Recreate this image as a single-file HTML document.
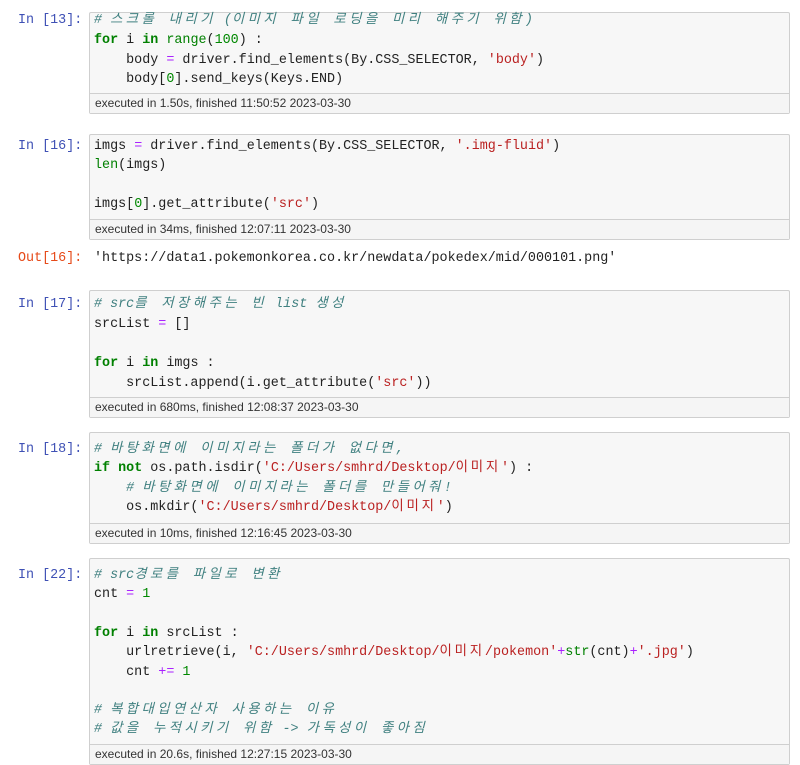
<!DOCTYPE html>
<html><head><meta charset="utf-8"><style>
body{margin:0;width:800px;height:752px;overflow:hidden;background:#fff;position:relative;font-family:"Liberation Mono","Noto Sans CJK KR",monospace;}
.box{position:absolute;left:89px;width:701px;background:#f7f7f7;border:1px solid #cfcfcf;border-radius:2px;box-sizing:border-box;}
.exec{position:absolute;left:0;right:0;bottom:0;height:19px;border-top:1px solid #cfcfcf;font:12px "Liberation Sans",sans-serif;color:#333;padding-left:5px;line-height:18px;background:#f5f5f5}
.l{position:absolute;left:94px;font-size:13.4px;white-space:pre;color:#222;line-height:19px;}
.p{position:absolute;left:18px;font-size:13.4px;color:#3f51b5;white-space:pre;line-height:19px;}
.o{color:#e64a19}
.c{color:#408080;font-style:italic}
.k{color:#008000;font-weight:bold}
.n{color:#080}
.op{color:#aa22ff}
.s{color:#ba2121}
.b{color:#008000}
.h{letter-spacing:3.4px}
.s .h{letter-spacing:2.8px}
</style></head><body>
<div class="box" style="top:12px;height:102px"><div class="exec">executed in 1.50s, finished 11:50:52 2023-03-30</div></div>
<div class="p" style="top:11px">In [13]:</div>
<div class="l" style="top:11px"><span class="c"># <span class="h">스크롤 내리기</span> (<span class="h">이미지 파일 로딩을 미리 해주기 위함</span>)</span></div>
<div class="l" style="top:31px"><span class="k">for</span> i <span class="k">in</span> <span class="b">range</span>(<span class="n">100</span>) :</div>
<div class="l" style="top:51px">    body <span class="op">=</span> driver.find_elements(By.CSS_SELECTOR, <span class="s">'body'</span>)</div>
<div class="l" style="top:70px">    body[<span class="n">0</span>].send_keys(Keys.END)</div>

<div class="box" style="top:134px;height:106px"><div class="exec">executed in 34ms, finished 12:07:11 2023-03-30</div></div>
<div class="p" style="top:137px">In [16]:</div>
<div class="l" style="top:137px">imgs <span class="op">=</span> driver.find_elements(By.CSS_SELECTOR, <span class="s">'.img-fluid'</span>)</div>
<div class="l" style="top:156px"><span class="b">len</span>(imgs)</div>
<div class="l" style="top:195px">imgs[<span class="n">0</span>].get_attribute(<span class="s">'src'</span>)</div>

<div class="p o" style="top:249px">Out[16]:</div>
<div class="l" style="top:249px">'https://data1.pokemonkorea.co.kr/newdata/pokedex/mid/000101.png'</div>

<div class="box" style="top:290px;height:128px"><div class="exec">executed in 680ms, finished 12:08:37 2023-03-30</div></div>
<div class="p" style="top:295px">In [17]:</div>
<div class="l" style="top:295px"><span class="c"># src<span class="h">를 저장해주는 빈</span> list <span class="h">생성</span></span></div>
<div class="l" style="top:315px">srcList <span class="op">=</span> []</div>
<div class="l" style="top:354px"><span class="k">for</span> i <span class="k">in</span> imgs :</div>
<div class="l" style="top:374px">    srcList.append(i.get_attribute(<span class="s">'src'</span>))</div>

<div class="box" style="top:432px;height:112px"><div class="exec">executed in 10ms, finished 12:16:45 2023-03-30</div></div>
<div class="p" style="top:440px">In [18]:</div>
<div class="l" style="top:440px"><span class="c"># <span class="h">바탕화면에 이미지라는 폴더가 없다면</span>,</span></div>
<div class="l" style="top:459px"><span class="k">if</span> <span class="k">not</span> os.path.isdir(<span class="s">'C:/Users/smhrd/Desktop/<span class="h">이미지</span>'</span>) :</div>
<div class="l" style="top:479px">    <span class="c"># <span class="h">바탕화면에 이미지라는 폴더를 만들어줘</span>!</span></div>
<div class="l" style="top:498px">    os.mkdir(<span class="s">'C:/Users/smhrd/Desktop/<span class="h">이미지</span>'</span>)</div>

<div class="box" style="top:558px;height:207px"><div class="exec">executed in 20.6s, finished 12:27:15 2023-03-30</div></div>
<div class="p" style="top:566px">In [22]:</div>
<div class="l" style="top:566px"><span class="c"># src<span class="h">경로를 파일로 변환</span></span></div>
<div class="l" style="top:585px">cnt <span class="op">=</span> <span class="n">1</span></div>
<div class="l" style="top:624px"><span class="k">for</span> i <span class="k">in</span> srcList :</div>
<div class="l" style="top:643px">    urlretrieve(i, <span class="s">'C:/Users/smhrd/Desktop/<span class="h">이미지</span>/pokemon'</span><span class="op">+</span><span class="b">str</span>(cnt)<span class="op">+</span><span class="s">'.jpg'</span>)</div>
<div class="l" style="top:663px">    cnt <span class="op">+=</span> <span class="n">1</span></div>
<div class="l" style="top:701px"><span class="c"># <span class="h">복합대입연산자 사용하는 이유</span></span></div>
<div class="l" style="top:720px"><span class="c"># <span class="h">값을 누적시키기 위함</span> -&gt; <span class="h">가독성이 좋아짐</span></span></div>
</body></html>
